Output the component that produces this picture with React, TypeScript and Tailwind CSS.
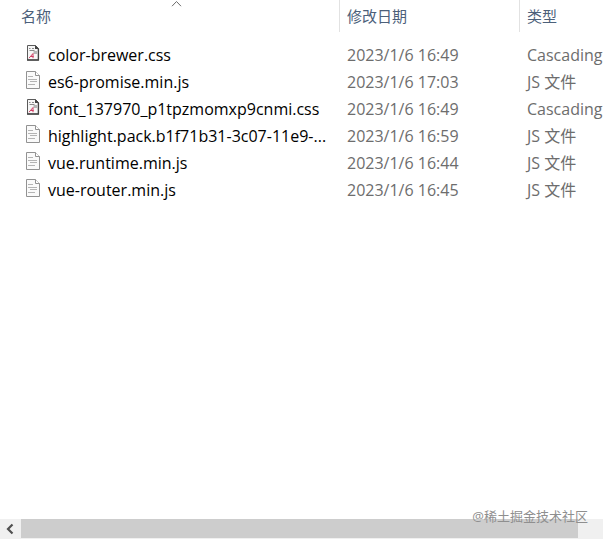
import React from 'react';

interface FileEntry {
  name: string;
  modified: string;
  type: string;
  kind: 'css' | 'js';
}

const files: FileEntry[] = [
  { name: 'color-brewer.css', modified: '2023/1/6 16:49', type: 'Cascading', kind: 'css' },
  { name: 'es6-promise.min.js', modified: '2023/1/6 17:03', type: 'JS 文件', kind: 'js' },
  { name: 'font_137970_p1tpzmomxp9cnmi.css', modified: '2023/1/6 16:49', type: 'Cascading', kind: 'css' },
  { name: 'highlight.pack.b1f71b31-3c07-11e9-...', modified: '2023/1/6 16:59', type: 'JS 文件', kind: 'js' },
  { name: 'vue.runtime.min.js', modified: '2023/1/6 16:44', type: 'JS 文件', kind: 'js' },
  { name: 'vue-router.min.js', modified: '2023/1/6 16:45', type: 'JS 文件', kind: 'js' },
];

const CssIcon: React.FC = () => (
  <svg className="w-4 h-[23px] shrink-0" viewBox="0 0 16 23" fill="none">
    <path d="M2.5 1.5h8l3 3v11.5h-11z" fill="#f7f7f7" stroke="#5a5a5a" />
    <path d="M10 1v4h4.2z" fill="#444" />
    <path d="M13.4 5v11.5M2 16h12" stroke="#444" strokeWidth="1.4" />
    <path d="M4 4.5h1.5M7 4.5h2M4.5 6.5h5" stroke="#8a8a8a" />
    <path d="M8.5 7h3.5v3H8.5z" fill="#b5b5b5" />
    <path d="M4 14.2L8 9.5v4.7M5.6 12.5h3" stroke="#cf3f63" />
  </svg>
);

const TextIcon: React.FC = () => (
  <svg className="w-4 h-[23px] shrink-0" viewBox="0 0 16 23" fill="none">
    <path d="M1.5 .5h9l4 4v13h-13z" fill="#fafafa" stroke="#929292" />
    <path d="M10.5 .5v4h4" fill="#fff" stroke="#929292" />
    <path d="M3 5.5h5M3 8.5h9M5 10.5h7M3 13.5h7" stroke="#b4b4b4" />
  </svg>
);

const App: React.FC = () => {
  return (
    <div className="relative flex flex-col min-h-screen overflow-hidden bg-white font-['Open_Sans','Noto_Sans_CJK_SC',sans-serif] text-[15px] leading-[27px]">
      <main className="flex-1">
        <table className="w-full table-fixed border-separate border-spacing-0 text-left whitespace-nowrap">
          <colgroup>
            <col className="w-[340px]" />
            <col className="w-[180px]" />
            <col />
          </colgroup>
          <thead className="text-[#4c607a]">
            <tr>
              <th className="relative h-8 p-0 pl-[21px] border-r border-[#e2e2e2] font-normal" aria-sort="ascending">
                <button type="button">名称</button>
                <svg className="absolute left-[171px] top-0 w-3 h-2" viewBox="0 0 12 8" fill="none">
                  <path d="M1 6.2L5.5 1.5L10 6.2" stroke="#6b6b6b" />
                </svg>
              </th>
              <th className="h-8 p-0 pl-[7px] border-r border-[#e2e2e2] font-normal">
                <button type="button">修改日期</button>
              </th>
              <th className="h-8 p-0 pl-[7px] font-normal">
                <button type="button">类型</button>
              </th>
            </tr>
          </thead>
          <tbody className="text-base leading-[27px] text-[#6d6d6d] before:block before:h-[10px]">
            {files.map(file => (
              <tr key={file.name}>
                <td className="p-0 pl-[25px] text-black">
                  <div className="flex items-center gap-[7px]">
                    {file.kind === 'css' ? <CssIcon /> : <TextIcon />}
                    <span>{file.name}</span>
                  </div>
                </td>
                <td className="p-0 pl-[7px]">{file.modified}</td>
                <td className="p-0 pl-[7px] overflow-hidden">{file.type}</td>
              </tr>
            ))}
          </tbody>
        </table>
      </main>

      <footer className="flex h-5 bg-[#f0f0f0]">
        <button type="button" aria-label="向左滚动" className="flex w-[21px] items-center justify-center">
          <svg className="w-3 h-3" viewBox="0 0 12 12" fill="none">
            <path d="M7.5 1.5L3 6L7.5 10.5" stroke="#505050" strokeWidth="2.2" />
          </svg>
        </button>
        <div className="flex-1 mb-px mr-[25px] bg-[#cdcdcd]" />
      </footer>

      <span className="absolute right-[15px] bottom-[13px] text-[13px] leading-5 text-[#8f8f8f]">@稀土掘金技术社区</span>
    </div>
  );
};

export default App;
